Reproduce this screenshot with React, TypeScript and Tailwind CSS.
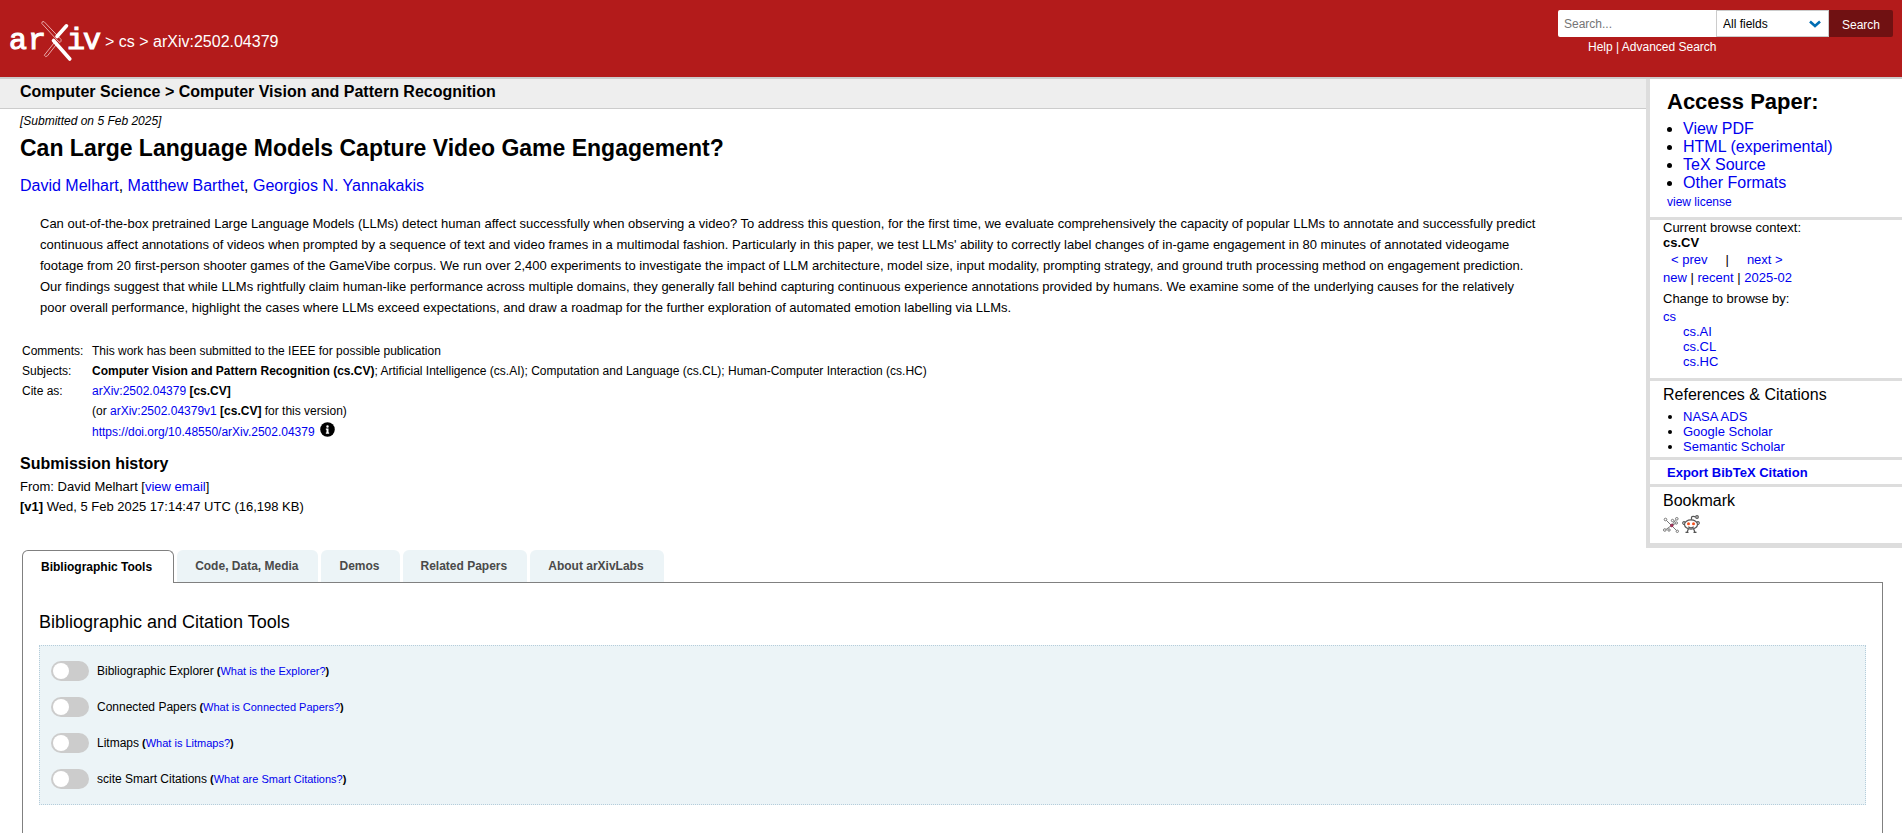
import { useState } from "react";
import clsx from "clsx";

const LINK = "text-[#0000ee] hover:underline";

const TABS = ["Bibliographic Tools", "Code, Data, Media", "Demos", "Related Papers", "About arXivLabs"];

const TOOLS = [
  { id: "explorer", name: "Bibliographic Explorer", question: "What is the Explorer?" },
  { id: "connected", name: "Connected Papers", question: "What is Connected Papers?" },
  { id: "litmaps", name: "Litmaps", question: "What is Litmaps?" },
  { id: "scite", name: "scite Smart Citations", question: "What are Smart Citations?" },
];

function Logo() {
  return (
    <svg width="96" height="42" viewBox="8 19 96 42" role="img" aria-label="arXiv">
      <g fill="#fff" stroke="#fff" strokeWidth="1.100" fontFamily="'Liberation Mono', monospace" fontSize="30">
        <text x="9" y="48">a</text>
        <text x="28" y="48">r</text>
        <text x="67" y="48">i</text>
        <text x="83" y="48">v</text>
      </g>
      <g fill="none" stroke="#e9a9a9" strokeWidth="1">
        <path d="M41.8 22.4 Q41.6 20 44 20.6 L61 38.4 Q61.600 40.500 60 41.500 L57 39z" />
        <path d="M57.500 42 L47.500 54.800 Q45.500 56.800 44.300 54.200 L54 42z" />
      </g>
      <g fill="none" stroke="#fff" strokeWidth="3.6" strokeLinecap="round">
        <path d="M66.500 24.800 L57 35.500" />
        <path d="M53.500 39.500 L69.800 58" />
      </g>
    </svg>
  );
}

function InfoIcon() {
  return (
    <svg width="15" height="15" viewBox="0 0 512 512" aria-label="Focus to learn more" className="ml-[5px] inline-block align-[-1px]">
      <circle cx="256" cy="256" r="248" />
      <path fill="#fff" d="M256 110a42 42 0 1 1 0 84 42 42 0 0 1 0-84zM200 222h90v134h22v42H200v-42h22v-92h-22z" />
    </svg>
  );
}

function BibSonomyIcon() {
  return (
    <svg width="16" height="16" viewBox="0 0 16 16" fill="none" stroke="#777" strokeWidth="1">
      <path d="M3 3l5.500 5.500M8.500 8.500l4-5.500M8.500 8.500L14 14M8.500 8.500L3 12.500M8.500 8.500l4-2" />
      <circle cx="2.500" cy="2.500" r="1.300" fill="#fff" />
      <circle cx="13.800" cy="1.800" r="1.300" fill="#fff" />
      <circle cx="9.500" cy="3.500" r="1.200" fill="#fff" />
      <circle cx="13.300" cy="6" r="1.200" fill="#fff" />
      <circle cx="1.800" cy="13" r="1.300" fill="#fff" />
      <circle cx="6" cy="13" r="1.200" fill="#fff" />
      <circle cx="14.300" cy="14.300" r="1.200" fill="#fff" />
      <circle cx="8.800" cy="8.500" r="1.300" fill="#b03060" stroke="#903050" />
    </svg>
  );
}

function RedditIcon() {
  return (
    <svg width="18" height="18" viewBox="0 0 18 18" fill="none" stroke="#555" strokeWidth="1.200">
      <path d="M6.500 13.500l-1.500 4M11.500 13.500l1.500 4M3.500 17.400h3M11.500 17.400h3" />
      <ellipse cx="9" cy="9.500" rx="6.500" ry="4.700" fill="#fff" />
      <path d="M3.300 7.200C1.500 5.500.3 7.500 1 8.800c.4.700 1 .9 1.600.8M14.700 7.200c1.800-1.700 3 .3 2.300 1.600-.4.700-1 .9-1.600.8" />
      <path d="M9.500 4.800V2.500c0-1.500 2.500-1.500 4-.5" />
      <circle cx="15" cy="2" r="1.300" fill="#fff" />
      <path d="M6.300 11.800c1.500 1.200 3.900 1.200 5.400 0" />
      <circle cx="6.500" cy="8.700" r="1.500" fill="#f4511e" stroke="none" />
      <circle cx="11.500" cy="8.700" r="1.500" fill="#f4511e" stroke="none" />
    </svg>
  );
}

function Header() {
  return (
    <header className="flex h-[79px] justify-between border-b-2 border-[#ccc] bg-[#b31b1b] text-white">
      <div className="flex items-center pt-1 pl-2">
        <a href="#"><Logo /></a>
        <div className="pt-0.5 pl-px text-base">
          &gt; <a href="#">cs</a> &gt; <span>arXiv:2502.04379</span>
        </div>
      </div>

      <form className="pt-2.5 pr-[9px]" onSubmit={(e) => e.preventDefault()}>
        <div className="flex h-[27px] text-xs">
          <input
            type="text"
            aria-label="Search term or terms"
            placeholder="Search..."
            className="w-[158px] rounded-l-xs bg-white px-1.5 text-black placeholder:text-[#757575]"
          />
          <div className="relative">
            <select aria-label="Field to search" className="h-full w-[113px] appearance-none border border-[#ccc] bg-white px-1.5 text-black">
              <option>All fields</option>
              <option>Title</option>
              <option>Author</option>
              <option>Abstract</option>
            </select>
            <svg width="12" height="8" viewBox="0 0 12 8" className="pointer-events-none absolute top-2.5 right-2">
              <path d="M1 1.500L6 6l5-4.500" fill="none" stroke="#006db3" strokeWidth="2.600" />
            </svg>
          </div>
          <button type="submit" className="w-16 rounded-r-xs bg-[#701112] pt-0.5">Search</button>
        </div>
        <p className="pl-[30px] text-xs leading-5">
          <a href="#">Help</a> | <a href="#">Advanced Search</a>
        </p>
      </form>
    </header>
  );
}

function Details() {
  return (
    <table className="mt-[23px] ml-0.5 text-xs leading-5">
      <tbody className="align-top">
        <tr>
          <th scope="row" className="w-[70px] text-left font-normal">Comments:</th>
          <td>This work has been submitted to the IEEE for possible publication</td>
        </tr>
        <tr>
          <th scope="row" className="text-left font-normal">Subjects:</th>
          <td>
            <b>Computer Vision and Pattern Recognition (cs.CV)</b>; Artificial Intelligence (cs.AI); Computation and
            Language (cs.CL); Human-Computer Interaction (cs.HC)
          </td>
        </tr>
        <tr>
          <th scope="row" className="text-left font-normal">Cite as:</th>
          <td><a href="#" className={LINK}>arXiv:2502.04379</a> <b>[cs.CV]</b></td>
        </tr>
        <tr>
          <td />
          <td>(or <a href="#" className={LINK}>arXiv:2502.04379v1</a> <b>[cs.CV]</b> for this version)</td>
        </tr>
        <tr>
          <td />
          <td className="pt-px"><a href="#" className={LINK}>https://doi.org/10.48550/arXiv.2502.04379</a><InfoIcon /></td>
        </tr>
      </tbody>
    </table>
  );
}

function Paper() {
  return (
    <main className="min-w-0 flex-1">
      <h1 className="h-[30px] border-b border-[#ccc] bg-[#eee] pl-5 text-base leading-[26px] font-bold">
        Computer Science &gt; Computer Vision and Pattern Recognition
      </h1>
      <div className="pl-5">
        <p className="pt-0.5 text-xs leading-5 italic">[Submitted on 5 Feb 2025]</p>
        <h2 className="mt-px text-[23px] leading-8 font-bold">Can Large Language Models Capture Video Game Engagement?</h2>
        <p className="mt-2.5 text-base leading-6">
          <a href="#" className={LINK}>David Melhart</a>, <a href="#" className={LINK}>Matthew Barthet</a>,{" "}
          <a href="#" className={LINK}>Georgios N. Yannakakis</a>
        </p>
        <blockquote className="mt-[15px] mr-[104px] ml-5 text-[13px] leading-[21px]">
          Can out-of-the-box pretrained Large Language Models (LLMs) detect human affect successfully when observing a
          video? To address this question, for the first time, we evaluate comprehensively the capacity of popular LLMs
          to annotate and successfully predict continuous affect annotations of videos when prompted by a sequence of
          text and video frames in a multimodal fashion. Particularly in this paper, we test LLMs' ability to correctly
          label changes of in-game engagement in 80 minutes of annotated videogame footage from 20 first-person shooter
          games of the GameVibe corpus. We run over 2,400 experiments to investigate the impact of LLM architecture,
          model size, input modality, prompting strategy, and ground truth processing method on engagement prediction.
          Our findings suggest that while LLMs rightfully claim human-like performance across multiple domains, they
          generally fall behind capturing continuous experience annotations provided by humans. We examine some of the
          underlying causes for the relatively poor overall performance, highlight the cases where LLMs exceed
          expectations, and draw a roadmap for the further exploration of automated emotion labelling via LLMs.
        </blockquote>
        <Details />
        <h2 className="mt-2.5 text-base leading-6 font-bold">Submission history</h2>
        <p className="mt-px text-[13px] leading-5">
          From: David Melhart [<a href="#" className={LINK}>view email</a>]
          <br />
          <b>[v1]</b> Wed, 5 Feb 2025 17:14:47 UTC (16,198 KB)
        </p>
      </div>
    </main>
  );
}

function Sidebar() {
  return (
    <aside className="w-64 shrink-0 border-b-[5px] border-l-4 border-[#ddd] text-[13px] leading-[15px]">
      <section className="h-[141px] border-b-[3px] border-[#ddd] pt-[9px] pl-[17px]">
        <h2 className="text-[22px] leading-7 font-bold">Access Paper:</h2>
        <ul className="mt-1 list-disc pl-4 text-base leading-[18px]">
          <li><a href="#" className={LINK}>View PDF</a></li>
          <li><a href="#" className={LINK}>HTML (experimental)</a></li>
          <li><a href="#" className={LINK}>TeX Source</a></li>
          <li><a href="#" className={LINK}>Other Formats</a></li>
        </ul>
        <a href="#" className={clsx(LINK, "block text-xs leading-5")}>view license</a>
      </section>
      <section className="h-[161px] border-b-[3px] border-[#ddd] pl-[13px]">
        <p>Current browse context:</p>
        <p className="font-bold">cs.CV</p>
        <p className="mt-px flex pl-2 leading-[18px]">
          <a href="#" className={LINK}>&lt; prev</a>
          <span className="px-[18px]">|</span>
          <a href="#" className={LINK}>next &gt;</a>
        </p>
        <p className="leading-[18px]">
          <a href="#" className={LINK}>new</a> | <a href="#" className={LINK}>recent</a> |{" "}
          <a href="#" className={LINK}>2025-02</a>
        </p>
        <p className="mt-1">Change to browse by:</p>
        <a href="#" className={clsx(LINK, "mt-[3px] block")}>cs</a>
        <ul className="pl-5">
          <li><a href="#" className={LINK}>cs.AI</a></li>
          <li><a href="#" className={LINK}>cs.CL</a></li>
          <li><a href="#" className={LINK}>cs.HC</a></li>
        </ul>
      </section>
      <section className="h-[79px] border-b-[3px] border-[#ddd] pt-1 pl-[13px]">
        <h3 className="text-base leading-5">References &amp; Citations</h3>
        <ul className="mt-1 list-disc pl-5">
          <li><a href="#" className={LINK}>NASA ADS</a></li>
          <li><a href="#" className={LINK}>Google Scholar</a></li>
          <li><a href="#" className={LINK}>Semantic Scholar</a></li>
        </ul>
      </section>
      <section className="h-[27px] border-b-[3px] border-[#ddd] pl-[17px] leading-[26px]">
        <a href="#" className={clsx(LINK, "font-bold")}>Export BibTeX Citation</a>
      </section>
      <section className="h-14 pt-1 pl-[13px]">
        <h3 className="text-base leading-5">Bookmark</h3>
        <div className="mt-1 flex items-end gap-[3px]">
          <a href="#" aria-label="Bookmark on BibSonomy"><BibSonomyIcon /></a>
          <a href="#" aria-label="Bookmark on Reddit"><RedditIcon /></a>
        </div>
      </section>
    </aside>
  );
}

function Labs() {
  const [active, setActive] = useState(TABS[0]);

  return (
    <div className="mt-0.5 mr-[19px] ml-[22px]">
      <div role="tablist" className="flex gap-[3px] text-xs font-bold">
        {TABS.map((tab) => (
          <button
            key={tab}
            type="button"
            role="tab"
            aria-selected={tab === active}
            onClick={() => setActive(tab)}
            className={clsx(
              "rounded-t-md pl-[18px]",
              tab === active
                ? "relative z-10 -mb-px h-[33px] border border-b-0 border-[#808080] bg-white pr-[21px] text-black"
                : "h-8 bg-[#ecf4f7] pr-5 text-[#4a4a4a]"
            )}
          >
            {tab}
          </button>
        ))}
      </div>

      <div className="border border-b-0 border-[#808080] px-4 pt-[27px] pb-12">
        <h2 className="text-lg leading-6">Bibliographic and Citation Tools</h2>
        <div className="mt-[11px] flex flex-col gap-4 border border-dotted border-[#b5cddb] bg-[#ecf4f7] px-[11px] py-[15px]">
          {TOOLS.map((tool) => (
            <div key={tool.id} className="flex h-5 items-center text-xs">
              <input
                id={tool.id}
                type="checkbox"
                className="h-5 w-[38px] appearance-none rounded-full bg-[#ccc] p-0.5 before:block before:size-4 before:rounded-full before:bg-white checked:bg-[#2196f3] checked:before:ml-[18px]"
              />
              <label htmlFor={tool.id} className="ml-2">{tool.name}</label>
              <span className="ml-[3px] text-[11px] font-bold">
                (<a href="#" className={clsx(LINK, "font-normal")}>{tool.question}</a>)
              </span>
            </div>
          ))}
        </div>
      </div>
    </div>
  );
}

export default function App() {
  return (
    <div className="min-h-screen bg-white font-['Liberation_Sans',Arial,sans-serif] text-black">
      <Header />
      <div className="flex items-start">
        <Paper />
        <Sidebar />
      </div>
      <Labs />
    </div>
  );
}
